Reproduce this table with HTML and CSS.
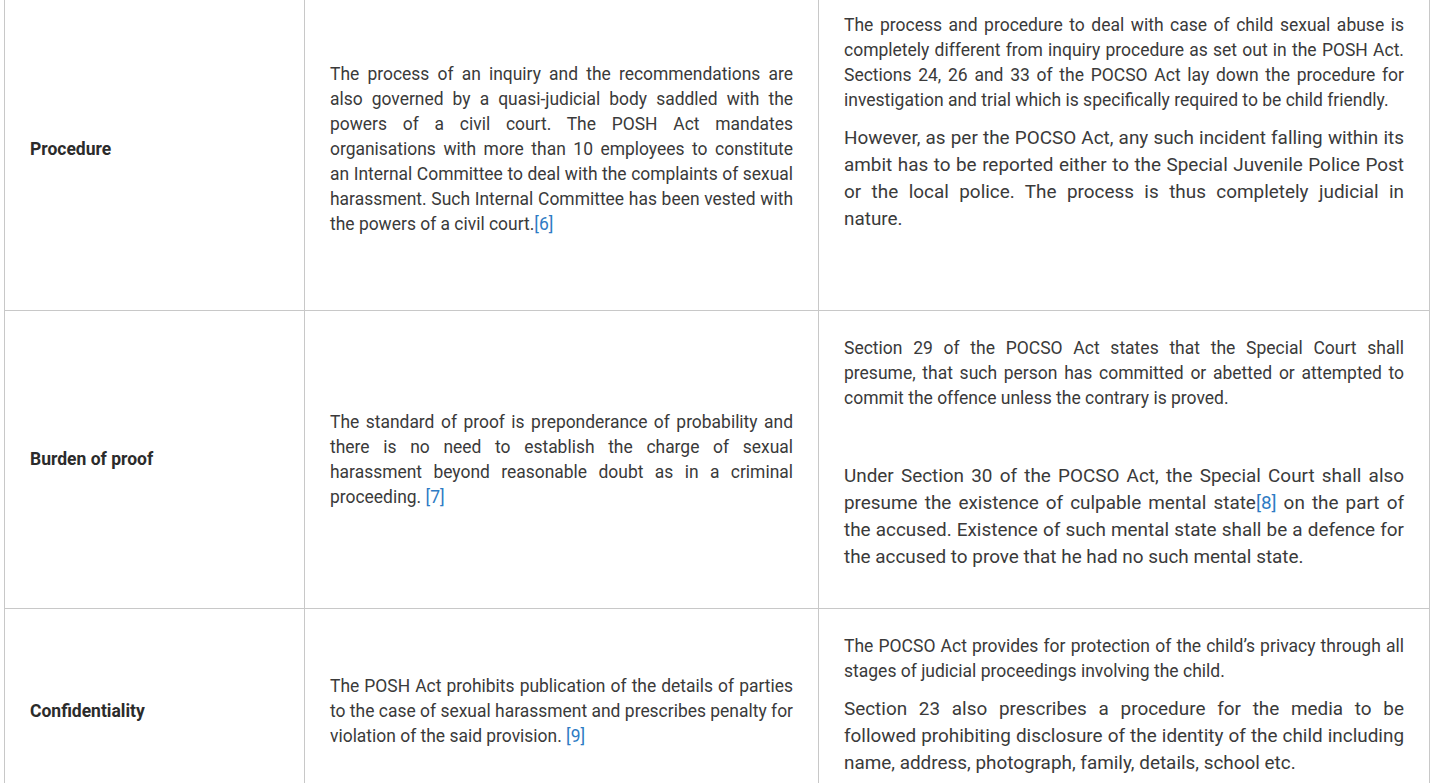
FILE: index.html
```html
<!DOCTYPE html>
<html lang="en">
<head>
<meta charset="utf-8">
<title>POSH vs POCSO</title>
<link rel="stylesheet" href="styles.css">
</head>
<body>
<div class="wrap">
<table class="cmp">
  <colgroup>
    <col class="c1"><col class="c2"><col class="c3">
  </colgroup>
  <tbody>
    <tr>
      <td class="label">Procedure</td>
      <td class="posh">The process of an inquiry and the recommendations are also governed by a quasi-judicial body saddled with the powers of a civil court. The POSH Act mandates organisations with more than 10 employees to constitute an Internal Committee to deal with the complaints of sexual harassment. Such Internal Committee has been vested with the powers of a civil court.<a class="ref" href="#fn6">[6]</a></td>
      <td class="pocso">
        <p class="pa">The process and procedure to deal with case of child sexual abuse is completely different from inquiry procedure as set out in the POSH Act. Sections 24, 26 and 33 of the POCSO Act lay down the procedure for investigation and trial which is specifically required to be child friendly.</p>
        <p class="pb">However, as per the POCSO Act, any such incident falling within its ambit has to be reported either to the Special Juvenile Police Post or the local police. The process is thus completely judicial in nature.</p>
        <p class="pb">&nbsp;</p>
      </td>
    </tr>
    <tr>
      <td class="label">Burden of proof</td>
      <td class="posh">The standard of proof is preponderance of probability and there is no need to establish the charge of sexual harassment beyond reasonable doubt as in a criminal proceeding. <a class="ref" href="#fn7">[7]</a></td>
      <td class="pocso">
        <p class="pa">Section 29 of the POCSO Act states that the Special Court shall presume, that such person has committed or abetted or attempted to commit the offence unless the contrary is proved.</p>
        <p class="pb">&nbsp;</p>
        <p class="pb">Under Section 30 of the POCSO Act, the Special Court shall also presume the existence of culpable mental state<a class="ref" href="#fn8">[8]</a> on the part of the accused. Existence of such mental state shall be a defence for the accused to prove that he had no such mental state.</p>
      </td>
    </tr>
    <tr>
      <td class="label">Confidentiality</td>
      <td class="posh">The POSH Act prohibits publication of the details of parties to the case of sexual harassment and prescribes penalty for violation of the said provision. <a class="ref" href="#fn9">[9]</a></td>
      <td class="pocso">
        <p class="pa">The POCSO Act provides for protection of the child’s privacy through all stages of judicial proceedings involving the child.</p>
        <p class="pb">Section 23 also prescribes a procedure for the media to be followed prohibiting disclosure of the identity of the child including name, address, photograph, family, details, school etc.</p>
      </td>
    </tr>
  </tbody>
</table>
</div>
</body>
</html>
```

FILE: styles.css
```css
html, body {
  margin: 0;
  padding: 0;
  background: #ffffff;
}
body {
  font-family: Roboto, "Liberation Sans", Arial, sans-serif;
  color: #3a3a3a;
}
.wrap {
  padding: 0 2px 0 4px;
  margin-top: -13px;
}
.cmp {
  border-collapse: collapse;
  width: 1425px;
  table-layout: fixed;
}
.c1 { width: 300px; }
.c2 { width: 514px; }
.c3 { width: 611px; }
.cmp td {
  border: 1px solid #c8c8c8;
  padding: 25px;
  vertical-align: middle;
  font-size: 17.45px;
  line-height: 25px;
  text-align: justify;
}
.cmp td.label {
  font-weight: 700;
  font-size: 17.5px;
  color: #2b2b2b;
  text-align: left;
}
.pocso p {
  margin: 0;
}
.pocso .pa {
  font-size: 17.5px;
  line-height: 25px;
  margin-bottom: 11px;
}
.pocso .pb {
  font-size: 18.9px;
  line-height: 27px;
  margin-bottom: 13px;
}
.ref {
  color: #2e7bc4;
  text-decoration: none;
}
```
